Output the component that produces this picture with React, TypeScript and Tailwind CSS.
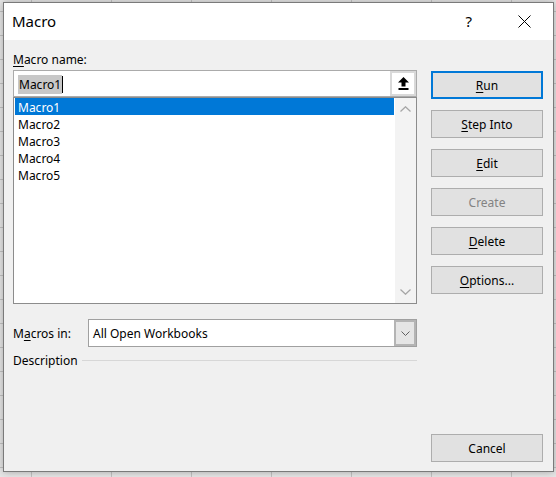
import React from "react";

function Btn({ children, primary, disabled }: { children: React.ReactNode; primary?: boolean; disabled?: boolean }) {
  return (
    <div
      className={
        "h-[28px] w-[112px] flex items-center justify-center bg-[#e1e1e1] text-[12px] pt-[1px] " +
        (primary ? "border-2 border-[#0078d7] " : "border border-[#adadad] ") +
        (disabled ? "text-[#838383]" : "text-black")
      }
    >
      {children}
    </div>
  );
}

function U({ children }: { children: React.ReactNode }) {
  return <span className="underline underline-offset-[2px] decoration-[1px]">{children}</span>;
}

export default function App() {
  const items = ["Macro1", "Macro2", "Macro3", "Macro4", "Macro5"];
  return (
    <div className="w-[556px] h-[477px] overflow-hidden bg-[#e8e8e8] bg-[image:repeating-linear-gradient(90deg,transparent_0px,transparent_31px,#c4c4c4_31px,#c4c4c4_32px,transparent_32px,transparent_80px),repeating-linear-gradient(180deg,transparent_0px,transparent_11px,#c4c4c4_11px,#c4c4c4_12px,transparent_12px,transparent_24px)] pt-[2px] pl-[3px] font-['Noto_Sans',sans-serif] text-black">
      <div className="w-[551px] h-[470px] border border-[#7a7a7a] bg-[#f0f0f0] flex flex-col shadow-[0_0_8px_rgba(0,0,0,0.3)]">
        {/* Title bar */}
        <div className="h-[37px] bg-white flex items-center pl-[8px] pr-[22px] shrink-0">
          <span className="text-[15px] leading-none">Macro</span>
          <span className="ml-auto text-[15px] leading-none mr-[46px]">?</span>
          <svg width="13" height="13" viewBox="0 0 13 13">
            <path d="M0.5 0.5 L12.5 12.5 M12.5 0.5 L0.5 12.5" stroke="#000" strokeWidth="1" fill="none" />
          </svg>
        </div>
        {/* Body */}
        <div className="flex flex-1 pl-[9px]">
          {/* Left column */}
          <div className="w-[404px] flex flex-col pt-[11px]">
            <div className="h-[16px] leading-[16px] text-[12px] pt-[1px]">
              <U>M</U>acro name:
            </div>
            <div className="mt-[3px] h-[27px] border border-[#ababab] bg-white flex items-stretch">
              <div className="flex-1 flex items-center pl-[4px] pt-[1px]">
                <span className="bg-[#c8c8c8] text-[12px] leading-[19px] px-[1px]">Macro1</span>
                <span className="w-px h-[17px] bg-black"></span>
              </div>
              <div className="w-[26px] border-2 border-[#d9d9d9] bg-white flex items-center justify-center">
                <svg width="11" height="13" viewBox="0 0 11 13">
                  <path d="M5.5 0 L11 5.5 L7.5 5.5 L7.5 9.5 L3.5 9.5 L3.5 5.5 L0 5.5 Z" fill="#000" />
                  <rect x="0.5" y="11" width="10" height="2" fill="#000" />
                </svg>
              </div>
            </div>
            <div className="h-[207px] border border-[#8c8c8c] bg-white flex">
              <div className="flex-1 flex flex-col pl-[1px] pr-[1px]">
                {items.map((it, i) => (
                  <div
                    key={it}
                    className={
                      "h-[17px] leading-[17px] text-[12px] pl-[3px] pt-[1px] " +
                      (i === 0 ? "bg-[#0078d7] text-white" : "text-black")
                    }
                  >
                    {it}
                  </div>
                ))}
              </div>
              <div className="w-[21px] bg-[#f3f3f3] flex flex-col items-center justify-between py-[8px]">
                <svg width="11" height="6" viewBox="0 0 11 6">
                  <path d="M0.5 5.5 L5.5 0.8 L10.5 5.5" stroke="#a6a6a6" strokeWidth="1.3" fill="none" />
                </svg>
                <svg width="11" height="6" viewBox="0 0 11 6">
                  <path d="M0.5 0.5 L5.5 5.2 L10.5 0.5" stroke="#a6a6a6" strokeWidth="1.3" fill="none" />
                </svg>
              </div>
            </div>
            <div className="mt-[15px] h-[28px] flex items-center">
              <div className="w-[75px] text-[12px] pt-[1px]">
                M<U>a</U>cros in:
              </div>
              <div className="flex-1 h-full border border-[#a0a0a0] bg-white flex items-stretch">
                <div className="flex-1 flex items-center pl-[4px] pt-[1px] text-[12px]">All Open Workbooks</div>
                <div className="w-[22px] bg-[#e5e5e5] border-2 border-[#b4b4b4] flex items-center justify-center">
                  <svg width="9" height="5" viewBox="0 0 9 5">
                    <path d="M0.5 0.5 L4.5 4.5 L8.5 0.5" stroke="#606060" strokeWidth="1" fill="none" />
                  </svg>
                </div>
              </div>
            </div>
            <div className="mt-[5px] h-[16px] flex items-center">
              <span className="text-[12px] leading-[16px] pt-[1px]">Description</span>
              <div className="flex-1 h-px bg-[#d7d7d7] ml-[4px]"></div>
            </div>
          </div>
          {/* Right column */}
          <div className="ml-[14px] flex flex-col pt-[31px] pb-[9px] gap-[11px]">
            <Btn primary>
              <U>R</U>un
            </Btn>
            <Btn>
              <U>S</U>tep Into
            </Btn>
            <Btn>
              <U>E</U>dit
            </Btn>
            <Btn disabled>Create</Btn>
            <Btn>
              <U>D</U>elete
            </Btn>
            <Btn>
              <U>O</U>ptions...
            </Btn>
            <div className="mt-auto">
              <Btn>Cancel</Btn>
            </div>
          </div>
        </div>
      </div>
    </div>
  );
}
